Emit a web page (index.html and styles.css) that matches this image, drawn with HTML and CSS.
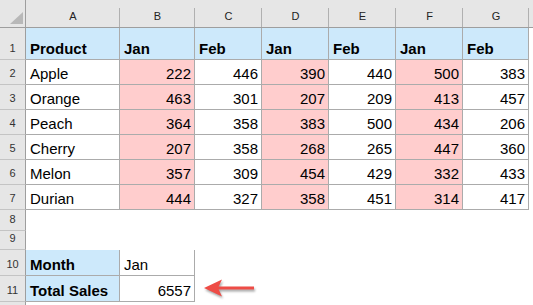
FILE: index.html
```html
<!DOCTYPE html>
<html>
<head>
<meta charset="utf-8">
<link rel="stylesheet" href="styles.css">
</head>
<body>
<div class="sheet">
  <div class="corner"><div class="tri"></div></div>
  <div class="ch">A</div><div class="ch">B</div><div class="ch">C</div><div class="ch">D</div><div class="ch">E</div><div class="ch">F</div><div class="ch">G</div><div class="chx"></div>

  <div class="rh">1</div>
  <div class="c blue b">Product</div><div class="c blue b">Jan</div><div class="c blue b">Feb</div><div class="c blue b">Jan</div><div class="c blue b">Feb</div><div class="c blue b">Jan</div><div class="c blue b">Feb</div><div class="x"></div>

  <div class="rh">2</div>
  <div class="c">Apple</div><div class="c pink n">222</div><div class="c n">446</div><div class="c pink n">390</div><div class="c n">440</div><div class="c pink n">500</div><div class="c n">383</div><div class="x"></div>

  <div class="rh">3</div>
  <div class="c">Orange</div><div class="c pink n">463</div><div class="c n">301</div><div class="c pink n">207</div><div class="c n">209</div><div class="c pink n">413</div><div class="c n">457</div><div class="x"></div>

  <div class="rh">4</div>
  <div class="c">Peach</div><div class="c pink n">364</div><div class="c n">358</div><div class="c pink n">383</div><div class="c n">500</div><div class="c pink n">434</div><div class="c n">206</div><div class="x"></div>

  <div class="rh">5</div>
  <div class="c">Cherry</div><div class="c pink n">207</div><div class="c n">358</div><div class="c pink n">268</div><div class="c n">265</div><div class="c pink n">447</div><div class="c n">360</div><div class="x"></div>

  <div class="rh">6</div>
  <div class="c">Melon</div><div class="c pink n">357</div><div class="c n">309</div><div class="c pink n">454</div><div class="c n">429</div><div class="c pink n">332</div><div class="c n">433</div><div class="x"></div>

  <div class="rh">7</div>
  <div class="c">Durian</div><div class="c pink n">444</div><div class="c n">327</div><div class="c pink n">358</div><div class="c n">451</div><div class="c pink n">314</div><div class="c n">417</div><div class="x"></div>

  <div class="rh">8</div><div class="blank"></div>
  <div class="rh">9</div><div class="blank"></div>

  <div class="rh">10</div>
  <div class="c blue b">Month</div><div class="c">Jan</div><div class="rest"></div>

  <div class="rh">11</div>
  <div class="c blue b">Total Sales</div><div class="c n">6557</div>
  <div class="rest arrowcell">
    <svg class="arrow" width="54" height="22" viewBox="0 0 54 22">
      <rect x="14" y="8.5" width="37" height="3" fill="#ee4c46"/>
      <path d="M1 10 L19 1.5 L15 10 L19 18.5 Z" fill="#ee4c46"/>
    </svg>
  </div>

  <div class="rh last"></div><div class="blank"></div>
</div>
</body>
</html>
```

FILE: styles.css
```css
* { box-sizing: border-box; }
html, body { margin: 0; padding: 0; background: #fff; }
body { font-family: "Liberation Sans", Arial, sans-serif; }

.sheet {
  width: 533px;
  height: 305px;
  overflow: hidden;
  display: grid;
  grid-template-columns: 26px 94px 75px 67px 67px 67px 67px 66px 1fr;
  grid-template-rows: 28px 32px repeat(6, 25px) 21px 19px 26px 26px 1fr;
}

.corner {
  background: #e6e6e6;
  border-right: 1px solid #9e9e9e;
  border-bottom: 1px solid #9e9e9e;
  display: flex;
  justify-content: flex-end;
  align-items: flex-end;
  padding: 0 2px 3px 0;
}
.tri {
  width: 13px;
  height: 12px;
  background: #b8b8b8;
  clip-path: polygon(100% 0, 100% 100%, 0 100%);
}

.ch {
  position: relative;
  background: #e6e6e6;
  border-bottom: 1px solid #9e9e9e;
  display: flex;
  justify-content: center;
  align-items: flex-end;
  padding-bottom: 5px;
  font-size: 11px;
  line-height: 12px;
  color: #222;
}
.ch::after {
  content: "";
  position: absolute;
  right: 0;
  top: 8px;
  bottom: 0;
  width: 1px;
  background: #b0b0b0;
}
.chx {
  background: #e6e6e6;
  border-bottom: 1px solid #9e9e9e;
}

.rh {
  grid-column: 1;
  background: #e6e6e6;
  border-right: 1px solid #9e9e9e;
  border-bottom: 1px solid #c4c4c4;
  display: flex;
  justify-content: center;
  align-items: flex-end;
  padding-bottom: 5px;
  font-size: 11px;
  line-height: 12px;
  color: #333;
}
.rh.last { border-bottom: none; }

.c {
  border-right: 1px solid #ababab;
  border-bottom: 1px solid #ababab;
  display: flex;
  align-items: flex-end;
  padding: 0 3px 2px 4px;
  font-size: 15px;
  line-height: 17px;
  color: #000;
  white-space: nowrap;
}
.c.n { justify-content: flex-end; }
.c.b { font-weight: bold; }
.blue { background: #cde9fb; }
.pink { background: #ffcdcd; }

.x { background: #fff; }
.blank { grid-column: 2 / -1; background: #fff; }
.rest { grid-column: 4 / -1; background: #fff; }

.arrowcell {
  display: flex;
  align-items: center;
  padding-left: 8px;
}
.arrow {
  display: block;
  filter: drop-shadow(1px 2px 1px rgba(0, 0, 0, 0.35));
}
```
